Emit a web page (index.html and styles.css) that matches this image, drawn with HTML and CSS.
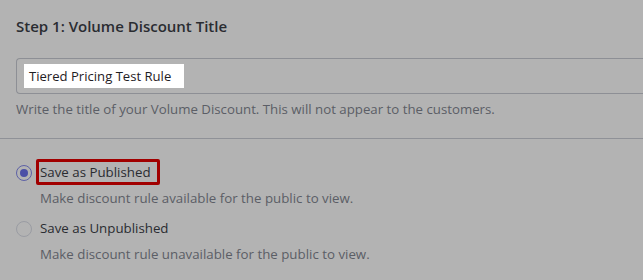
FILE: index.html
```html
<!DOCTYPE html>
<html>
<head>
<meta charset="utf-8">
<link rel="stylesheet" href="styles.css">
</head>
<body>
<div class="page">
  <section class="step">
    <h2 class="step-title">Step 1: Volume Discount Title</h2>
    <div class="field">
      <span class="field-value">Tiered Pricing Test Rule</span>
    </div>
    <p class="help">Write the title of your Volume Discount. This will not appear to the customers.</p>
  </section>
  <hr class="divider">
  <section class="options">
    <div class="option">
      <span class="radio checked"></span>
      <div class="option-body">
        <span class="option-label highlighted">Save as Published</span>
        <p class="option-help">Make discount rule available for the public to view.</p>
      </div>
    </div>
    <div class="option">
      <span class="radio"></span>
      <div class="option-body">
        <span class="option-label">Save as Unpublished</span>
        <p class="option-help">Make discount rule unavailable for the public to view.</p>
      </div>
    </div>
  </section>
</div>
</body>
</html>
```

FILE: styles.css
```css
html, body {
  margin: 0;
  padding: 0;
  background: #b3b3b3;
  overflow: hidden;
}
body {
  font-family: "Open Sans", "Noto Sans", sans-serif;
  color: #2a2c31;
  width: 643px;
  height: 280px;
}
.page {
  width: 643px;
}
.step {
  padding: 16px 0 0 16px;
}
.step-title {
  margin: 0;
  font-size: 15px;
  font-weight: 600;
  line-height: 20px;
  color: #2a2c31;
}
.field {
  margin-top: 22px;
  height: 34px;
  border: 1px solid #8d8f95;
  border-right: 0;
  border-radius: 4px 0 0 4px;
  display: flex;
  align-items: center;
  padding-left: 7px;
}
.field-value {
  background: #ffffff;
  height: 24px;
  line-height: 24px;
  width: 160px;
  box-sizing: border-box;
  padding-left: 5px;
  font-size: 13.1px;
  color: #1f2024;
}
.help {
  margin: 6px 0 0 0;
  font-size: 13.25px;
  line-height: 18px;
  color: #5b5e66;
}
.divider {
  margin: 20px 0 0 0;
  border: 0;
  border-top: 1px solid #8f9197;
  height: 0;
}
.options {
  padding: 20px 0 0 16px;
  display: flex;
  flex-direction: column;
  gap: 8px;
}
.option {
  display: flex;
  align-items: flex-start;
  gap: 4px;
}
.radio {
  width: 14px;
  height: 14px;
  border: 1px solid #9a9ca3;
  border-radius: 50%;
  margin-top: 6px;
  box-sizing: content-box;
  display: flex;
  align-items: center;
  justify-content: center;
  flex: none;
}
.radio.checked {
  border-color: #5d61a6;
}
.radio.checked::after {
  content: "";
  width: 8px;
  height: 8px;
  border-radius: 50%;
  background: #4b4fa6;
}
.option-body {
  display: flex;
  flex-direction: column;
  align-items: flex-start;
}
.option-label {
  font-size: 13.3px;
  line-height: 20px;
  padding: 0 0 0 1px;
  color: #2a2c31;
  border: 3px solid transparent;
}
.option-label.highlighted {
  border-color: #a10000;
  border-radius: 2px;
  padding-right: 6px;
}
.option-help {
  margin: 4px 0 0 4px;
  font-size: 13.3px;
  line-height: 18px;
  color: #5b5e66;
}
```
